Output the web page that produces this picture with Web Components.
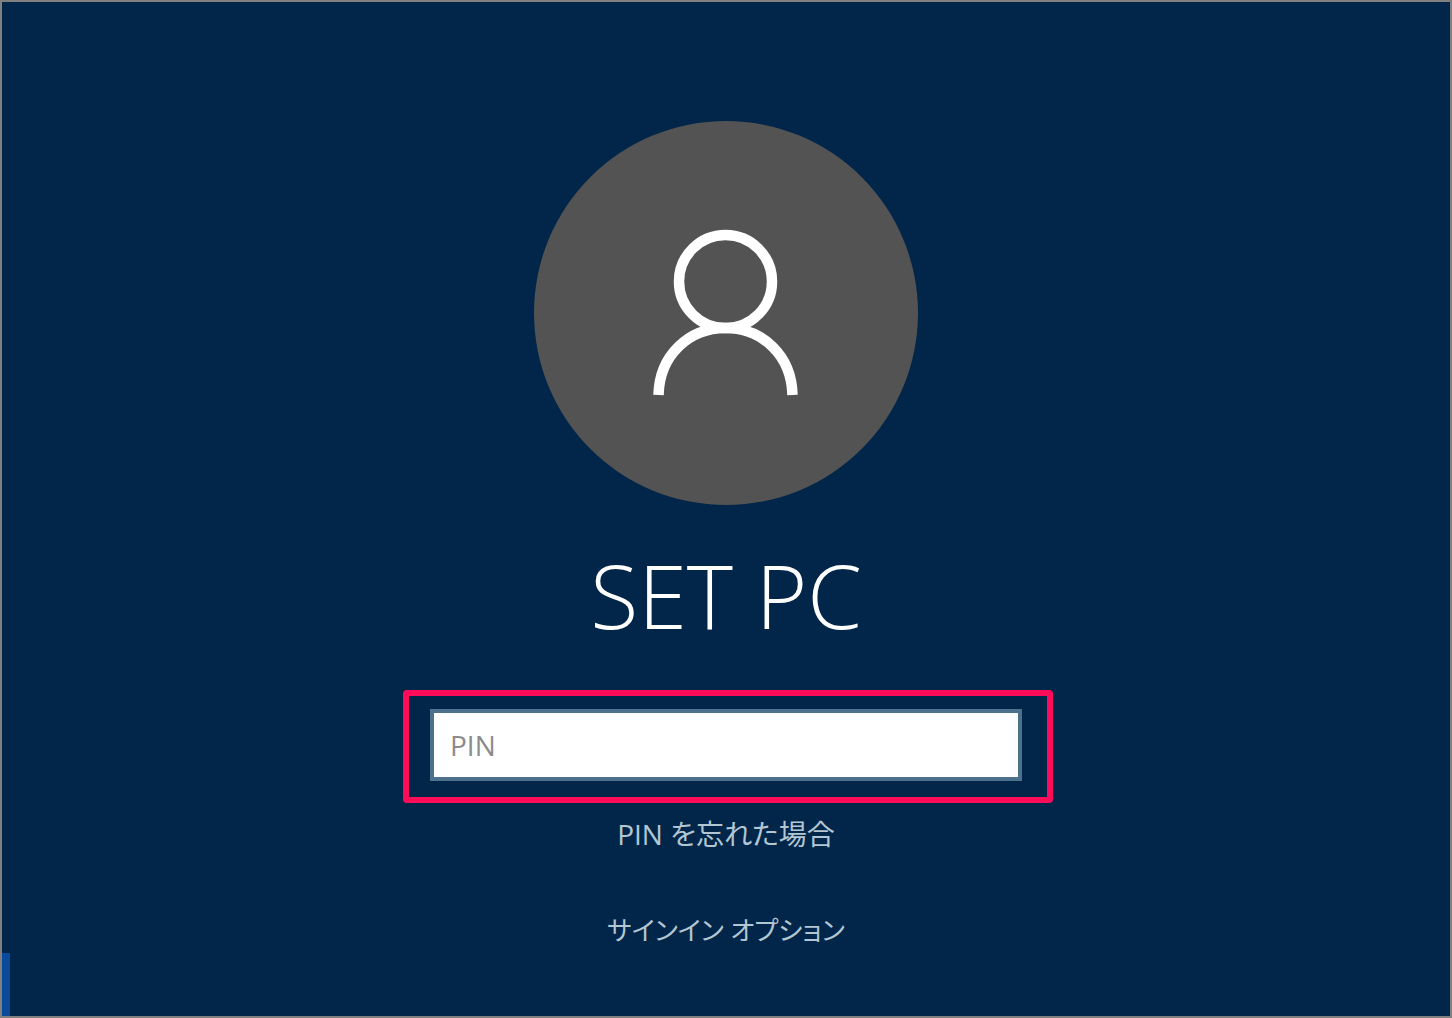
<!DOCTYPE html>
<html lang="ja">
<head>
<meta charset="utf-8">
<meta name="viewport" content="width=device-width, initial-scale=1">
<title>SET PC</title>
<style>
html, body { margin: 0; height: 100%; background: #022649; }
body { font-family: "Open Sans", "Noto Sans CJK JP", sans-serif; }
</style>
</head>
<body>
<lock-screen>
  <user-avatar></user-avatar>
  <user-name>SET PC</user-name>
  <pin-field label="PIN"></pin-field>
  <text-link href="#forgot">PIN を忘れた場合</text-link>
  <text-link href="#options">サインイン オプション</text-link>
</lock-screen>
<script>
class BaseElement extends HTMLElement {
  constructor() {
    super();
    this.attachShadow({ mode: "open" }).innerHTML = this.constructor.markup;
  }
}

class LockScreen extends BaseElement {
  static markup = `
    <style>
      :host {
        display: flex; flex-direction: column; align-items: center;
        position: relative; box-sizing: border-box; min-height: 100%;
        padding: 119px 16px 48px; border: 2px solid #808080;
        background: #022649; color: #fff;
      }
      .edge { position: absolute; left: 0; bottom: 0; width: 8px; height: 63px; background: #0b4a9b; }
    </style>
    <slot></slot>
    <div class="edge"></div>`;
}

class UserAvatar extends BaseElement {
  static markup = `
    <style>
      :host { display: block; width: 384px; height: 384px; border-radius: 50%; background: #535353; }
      svg { display: block; width: 100%; height: 100%; }
    </style>
    <svg viewBox="0 0 384 384" fill="none" stroke="#fff" stroke-width="10.5" aria-hidden="true">
      <circle cx="191.5" cy="160.5" r="46.5"/>
      <path d="M124.5 274C125.5 234 155 207 191.5 207S257.5 234 258.5 274"/>
    </svg>`;
}

class UserName extends BaseElement {
  static markup = `
    <style>
      :host { display: block; margin-top: 28px; }
      h1 { margin: 0; font-size: 88px; line-height: 124px; font-weight: 300; }
    </style>
    <h1><slot></slot></h1>`;
}

class PinField extends BaseElement {
  static markup = `
    <style>
      :host { display: block; position: relative; width: 592px; max-width: 100%; margin-top: 52px; }
      input {
        display: block; box-sizing: border-box; width: 100%; height: 72px; margin: 0;
        padding: 0 16px; border: 4px solid #4c718d; border-radius: 0; outline: 0;
        background: #fff; color: #222; font: 28px "Open Sans", sans-serif;
      }
      input::placeholder { color: #8c8c8c; opacity: 1; }
      .highlight {
        position: absolute; inset: -19px -31px -22px -27px;
        border: 6px solid #fe0c59; border-radius: 4px; pointer-events: none;
      }
    </style>
    <input type="password" autocomplete="off">
    <div class="highlight"></div>`;
  connectedCallback() {
    const input = this.shadowRoot.querySelector("input");
    input.placeholder = this.getAttribute("label");
    input.setAttribute("aria-label", this.getAttribute("label"));
  }
}

class TextLink extends BaseElement {
  static markup = `
    <style>
      :host { display: block; margin-top: 33px; font-size: 28px; }
      :host(:last-of-type) { margin-top: 56px; font-size: 26px; }
      a {
        display: block; color: #b3c6d3; text-decoration: none;
        line-height: 40px; font-feature-settings: "palt";
      }
    </style>
    <a><slot></slot></a>`;
  connectedCallback() {
    this.shadowRoot.querySelector("a").href = this.getAttribute("href");
  }
}

customElements.define("lock-screen", LockScreen);
customElements.define("user-avatar", UserAvatar);
customElements.define("user-name", UserName);
customElements.define("pin-field", PinField);
customElements.define("text-link", TextLink);
</script>
</body>
</html>
